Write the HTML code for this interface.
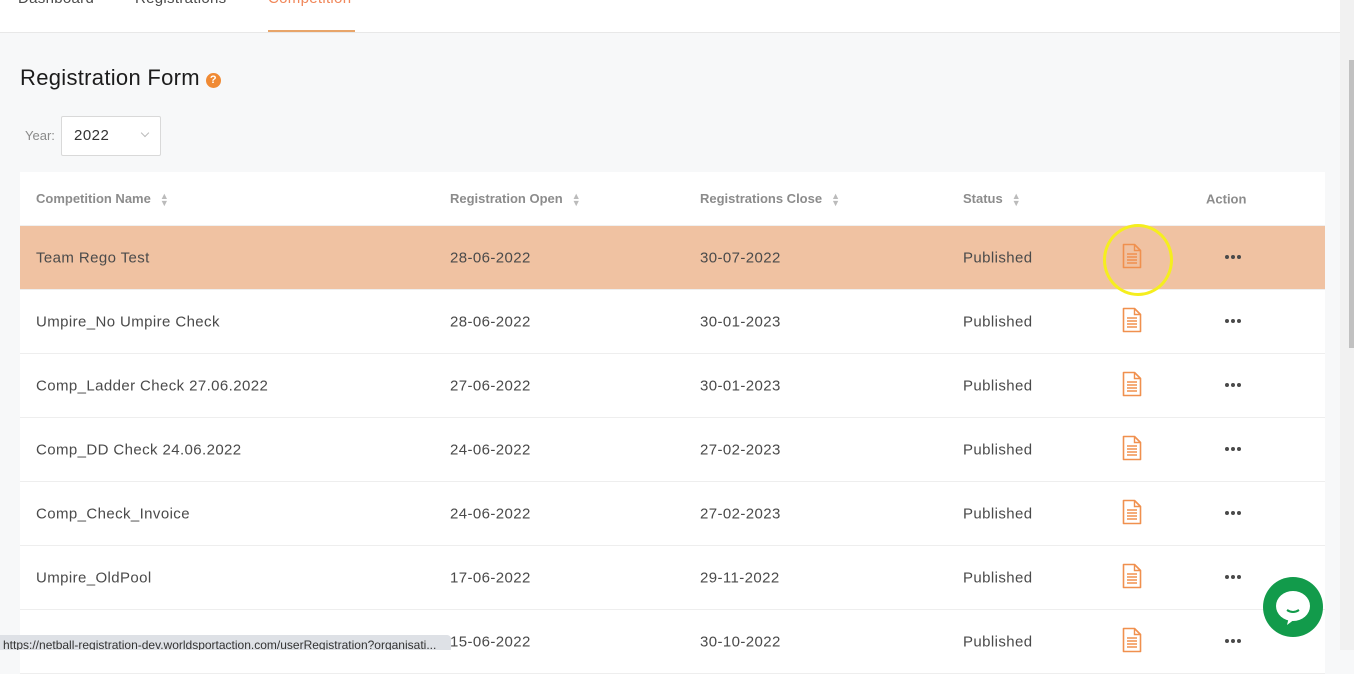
<!DOCTYPE html>
<html><head><style>
body{margin:0;width:1354px;height:650px;overflow:hidden;background:#f7f8f9;font-family:"Liberation Sans",sans-serif;position:relative}
.top{position:absolute;left:0;top:0;width:1340px;height:32px;background:#fff;border-bottom:1px solid #e8e8e8}
.tab{position:absolute;top:-10px;font-size:15px;color:#4a4a4a;letter-spacing:0.3px}
h1{position:absolute;left:20px;top:65px;margin:0;font-weight:normal;font-size:22px;color:#1c1c1c;letter-spacing:0.3px}
.q{display:inline-block;width:15px;height:15px;border-radius:50%;background:#f08a34;color:#fff;font-size:11px;font-weight:bold;text-align:center;line-height:15px;vertical-align:2px;margin-left:6px}
.yl{position:absolute;left:25px;top:128px;font-size:13px;color:#8a8a8a}
.sel{position:absolute;left:61px;top:116px;width:98px;height:38px;border:1px solid #d9d9d9;background:#fff;border-radius:2px}
.sel span{position:absolute;left:12px;top:10px;font-size:15px;color:#333;letter-spacing:0.5px}
.sel i{position:absolute;right:12px;top:13px;width:5px;height:5px;border-right:1px solid #bbb;border-bottom:1px solid #bbb;transform:rotate(45deg)}
.tbl{position:absolute;left:20px;top:172px;width:1305px;background:#fff}
.hd{height:53px;position:relative;font-size:13px;color:#8c8c8c;font-weight:bold;border-bottom:1px solid #f0f0f0}
.hd span,.row span{position:absolute;top:50%;transform:translateY(-50%)}
.row{height:63px;border-bottom:1px solid #eee;position:relative;font-size:15px;color:#4a4a4a;letter-spacing:0.4px}
.row.h{background:#f0c2a2}
.sort{display:inline-block;position:static!important;transform:none!important;margin-left:9px;vertical-align:-3px;font-size:9px;line-height:7px;color:#bbb;font-weight:normal}
.dots{position:absolute;left:1205px;top:29px;display:flex;gap:2px}
.dots b{display:block;width:4px;height:4px;border-radius:50%;background:#4a4a4a}
.doc{position:absolute;left:1102px;top:50%;transform:translateY(-50%)}
.sb{position:absolute;left:1340px;top:0;width:14px;height:650px;background:#f1f1f1}
.th{position:absolute;left:1349px;top:60px;width:5px;height:288px;background:#c1c1c1}
.status{position:absolute;left:0;top:635px;width:448px;height:15px;background:#dee1e6;border-top-right-radius:4px;font-size:12px;color:#333;line-height:20px;padding-left:3px;overflow:hidden;white-space:nowrap}
.chat{position:absolute;left:1263px;top:577px;width:60px;height:60px;border-radius:50%;background:#129b4b}
</style></head><body>
<div class="top">
<div class="tab" style="left:18px">Dashboard</div>
<div class="tab" style="left:135px">Registrations</div>
<div class="tab" style="left:268px;color:#f0875a">Competition</div>
<div style="position:absolute;left:268px;top:30px;width:87px;height:2px;background:#e8a56a"></div>
</div>
<h1>Registration Form<span class="q">?</span></h1>
<div class="yl">Year:</div>
<div class="sel"><span>2022</span><i></i></div>
<div class="tbl">
<div class="hd">
<span style="left:16px">Competition Name<span class="sort">▲<br>▼</span></span>
<span style="left:430px">Registration Open<span class="sort">▲<br>▼</span></span>
<span style="left:680px">Registrations Close<span class="sort">▲<br>▼</span></span>
<span style="left:943px">Status<span class="sort">▲<br>▼</span></span>
<span style="left:1186px">Action</span>
</div>
<div id="rows"></div>
</div>
<script>
var d=[["Team Rego Test","28-06-2022","30-07-2022"],["Umpire_No Umpire Check","28-06-2022","30-01-2023"],["Comp_Ladder Check 27.06.2022","27-06-2022","30-01-2023"],["Comp_DD Check 24.06.2022","24-06-2022","27-02-2023"],["Comp_Check_Invoice","24-06-2022","27-02-2023"],["Umpire_OldPool","17-06-2022","29-11-2022"],["","15-06-2022","30-10-2022"]];
var svg='<svg width="20" height="26" viewBox="0 0 20 26"><path d="M1.5 1.5h11l6 6v17h-17z" fill="none" stroke="#f0904e" stroke-width="1.6" stroke-linejoin="round"/><path d="M12.5 1.5v6h6" fill="none" stroke="#f0904e" stroke-width="1.4"/><path d="M5 11h10M5 14h10M5 17h10M5 20h10" stroke="#f0904e" stroke-width="1.4"/></svg>';
var h='';d.forEach(function(r,i){h+='<div class="row'+(i==0?' h':'')+'"><span style="left:16px">'+r[0]+'</span><span style="left:430px">'+r[1]+'</span><span style="left:680px">'+r[2]+'</span><span style="left:943px">Published</span><div class="doc">'+svg+'</div><div class="dots"><b></b><b></b><b></b></div></div>'});
document.getElementById('rows').innerHTML=h;
</script>
<div style="position:absolute;left:1103px;top:224px;width:70px;height:72px;border:3px solid #f5ee1e;border-radius:50%;box-sizing:border-box"></div>
<div class="sb"></div><div class="th"></div>
<div class="chat"><svg width="60" height="60"><ellipse cx="30" cy="29" rx="17" ry="15" fill="#fff"/><path d="M26 40l-2 8 8-6z" fill="#fff"/><path d="M24 33q6 4 12 0" stroke="#129b4b" stroke-width="2" fill="none"/></svg></div>
<div class="status">https://netball-registration-dev.worldsportaction.com/userRegistration?organisati...</div>
</body></html>
